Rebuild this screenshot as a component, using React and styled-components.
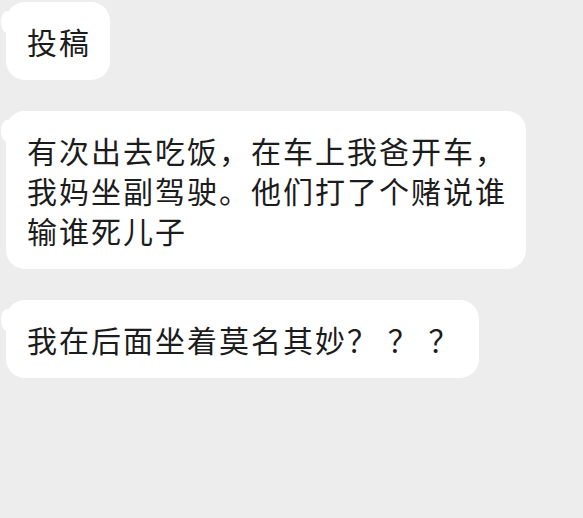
import React from 'react'
import styled, { createGlobalStyle } from 'styled-components'

const GlobalStyle = createGlobalStyle`
  html, body {
    margin: 0;
    padding: 0;
    background: #ededed;
  }
  body {
    font-family: "Noto Sans CJK SC", "Noto Sans", sans-serif;
  }
`

const Chat = styled.div`
  display: flex;
  flex-direction: column;
  align-items: flex-start;
  gap: 31px;
  padding: 2px 0 0 6px;
  min-height: 518px;
  box-sizing: border-box;
`

const Bubble = styled.div`
  position: relative;
  max-width: 520px;
  box-sizing: border-box;
  background: #ffffff;
  border-radius: 19px;
  padding: 19px 19px 19px 21px;
  color: #1c1c1c;
  font-size: 30px;
  letter-spacing: 2px;
  line-height: 40px;
  white-space: pre-wrap;

  &::before {
    content: '';
    position: absolute;
    left: -5px;
    top: 9px;
    width: 12px;
    height: 22px;
    border-radius: 50%;
    background: #ffffff;
  }
`

const Text = styled.span`
  position: relative;
`

const messages = [
  '投稿',
  '有次出去吃饭，在车上我爸开车，我妈坐副驾驶。他们打了个赌说谁输谁死儿子',
  '我在后面坐着莫名其妙？ ？ ？',
]

export default function App() {
  return (
    <>
      <GlobalStyle />
      <Chat>
        {messages.map((m, i) => (
          <Bubble key={i}>
            <Text>{m}</Text>
          </Bubble>
        ))}
      </Chat>
    </>
  )
}
